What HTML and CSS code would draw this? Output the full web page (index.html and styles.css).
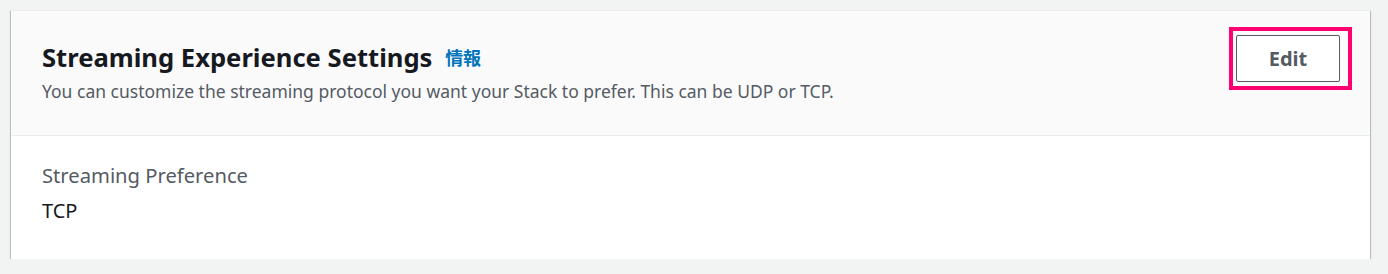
FILE: index.html
```html
<!DOCTYPE html>
<html>
<head>
<meta charset="utf-8">
<link rel="stylesheet" href="styles.css">
</head>
<body>
<div class="page">
  <section class="card">
    <header class="card-header">
      <div class="titles">
        <h2 class="title">Streaming Experience Settings <a class="info">情報</a></h2>
        <p class="desc">You can customize the streaming protocol you want your Stack to prefer. This can be UDP or TCP.</p>
      </div>
      <div class="highlight">
        <button class="btn">Edit</button>
      </div>
    </header>
    <div class="card-body">
      <div class="label">Streaming Preference</div>
      <div class="value">TCP</div>
    </div>
  </section>
</div>
</body>
</html>
```
FILE: styles.css
```css
html, body {
  margin: 0;
  padding: 0;
  background: #f2f3f3;
  font-family: "Noto Sans", "Open Sans", sans-serif;
}
.page {
  padding: 10px 18px 0 11px;
}
.card {
  background: #fff;
  box-shadow: 0 1px 1px 0 rgba(0,28,36,0.4), 1px 1px 1px 0 rgba(0,28,36,0.18), -1px 1px 1px 0 rgba(0,28,36,0.18);
  border-top: 1px solid #eaeded;
}
.card-header {
  background: #fafafa;
  border-bottom: 1px solid #eaeded;
  display: flex;
  justify-content: space-between;
  align-items: flex-start;
  padding: 0 18px 0 31px;
  height: 124px;
}
.titles {
  padding-top: 29px;
}
.title {
  margin: 0;
  font-size: 25.6px;
  font-weight: 700;
  color: #16191f;
  line-height: 34px;
}
.info {
  font-size: 18px;
  color: #0073bb;
  font-weight: 700;
  margin-left: 6px;
  vertical-align: 2px;
  font-family: "Noto Sans CJK JP", sans-serif;
}
.desc {
  margin: 4px 0 0;
  font-size: 17.5px;
  color: #545b64;
  line-height: 24px;
}
.highlight {
  margin-top: 16px;
  border: 4px solid #ff0070;
  padding: 4px 8px 4px 3px;
}
.btn {
  display: block;
  width: 104px;
  height: 47px;
  background: #fff;
  border: 1px solid #545b64;
  border-radius: 2px;
  color: #545b64;
  font-family: "Noto Sans", sans-serif;
  font-size: 20px;
  font-weight: 700;
  padding: 0;
}
.card-body {
  padding: 25px 31px 34px;
}
.label {
  font-size: 20.2px;
  color: #545b64;
  line-height: 28px;
}
.value {
  margin-top: 8px;
  font-size: 20px;
  color: #16191f;
  line-height: 28px;
}
```
